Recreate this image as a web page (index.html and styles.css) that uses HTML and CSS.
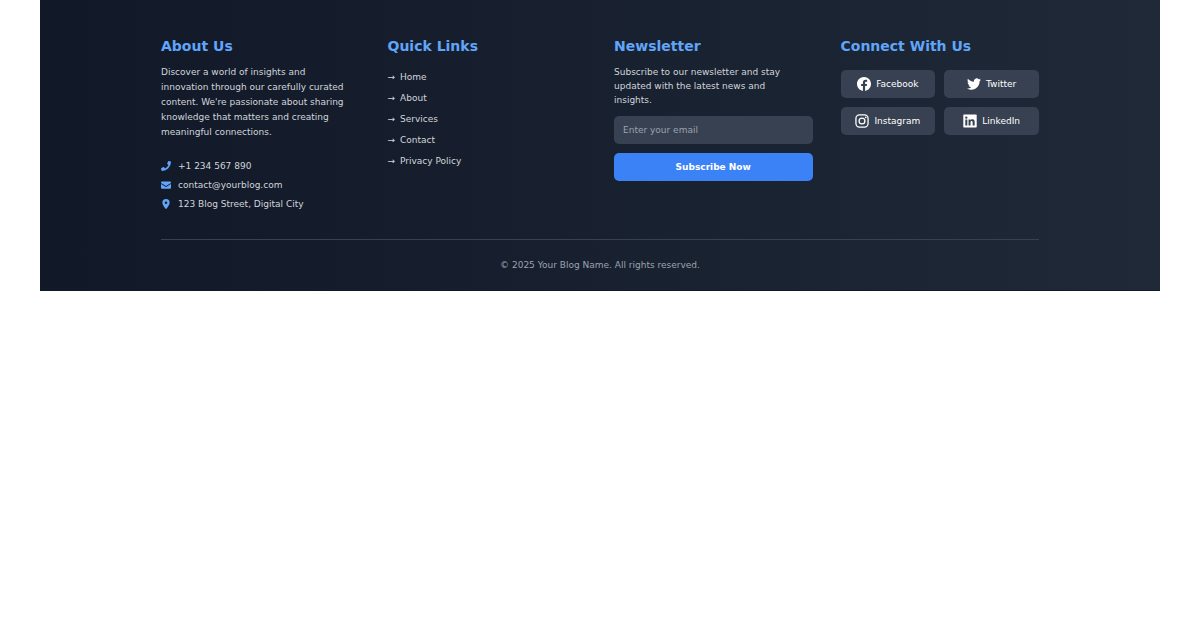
FILE: index.html
```html
<!DOCTYPE html>
<html lang="en">
<head>
<meta charset="utf-8">
<meta name="viewport" content="width=device-width, initial-scale=1">
<title>Your Blog Name</title>
<link rel="stylesheet" href="styles.css">
</head>
<body>
<footer class="footer">
  <div class="container">
    <div class="columns">
      <section>
        <h2 class="title">About Us</h2>
        <p class="about-text">Discover a world of insights and innovation through our carefully curated content. We're passionate about sharing knowledge that matters and creating meaningful connections.</p>
        <ul class="contacts">
          <li><svg class="contact-icon" viewBox="0 0 20 20" aria-hidden="true"><path d="M19.4 1 15.4 .05a1 1 0 0 0-1.1.55l-1.9 4.3a1 1 0 0 0 .3 1.1l2.3 1.9a14 14 0 0 1-6.9 6.9L6.2 12.500a1 1 0 0 0-1.100-.3L.7 14.100a1 1 0 0 0-.6 1.100l1 4a1 1 0 0 0 .9.750A17.900 17.900 0 0 0 20 2a1 1 0 0 0-.6-1z"/></svg>+1 234 567 890</li>
          <li><svg class="contact-icon" viewBox="0 0 20 20" aria-hidden="true"><path d="M2 3h16a2 2 0 0 1 2 2v.9l-10 6.200L0 5.900V5a2 2 0 0 1 2-2zM0 8l9.200 5.700q.8.400 1.600 0L20 8v7.500a2 2 0 0 1-2 2H2a2 2 0 0 1-2-2z"/></svg>contact@yourblog.com</li>
          <li><svg class="contact-icon" viewBox="0 0 20 20" aria-hidden="true"><path fill-rule="evenodd" d="M10 0a7.300 7.300 0 0 1 7.300 7.400c0 3.600-3.800 8.600-6.500 12.200a1 1 0 0 1-1.600 0C6.500 16 2.700 11 2.700 7.400A7.300 7.300 0 0 1 10 0zm0 4.800a2.600 2.600 0 1 0 0 5.200 2.600 2.600 0 0 0 0-5.200z"/></svg>123 Blog Street, Digital City</li>
        </ul>
      </section>
      <nav aria-labelledby="links-title">
        <h2 class="title" id="links-title">Quick Links</h2>
        <ul class="links">
          <li><a href="#"><span>→</span>Home</a></li>
          <li><a href="#"><span>→</span>About</a></li>
          <li><a href="#"><span>→</span>Services</a></li>
          <li><a href="#"><span>→</span>Contact</a></li>
          <li><a href="#"><span>→</span>Privacy Policy</a></li>
        </ul>
      </nav>
      <section>
        <h2 class="title">Newsletter</h2>
        <p class="news-text">Subscribe to our newsletter and stay updated with the latest news and insights.</p>
        <form class="form">
          <input class="email" type="email" aria-label="Email address" placeholder="Enter your email">
          <button class="subscribe" type="button">Subscribe Now</button>
        </form>
      </section>
      <section>
        <h2 class="title">Connect With Us</h2>
        <div class="socials">
          <a class="social" href="#"><svg viewBox="0 0 24 24" aria-hidden="true"><path d="M24 12.073c0-6.627-5.373-12-12-12s-12 5.373-12 12c0 5.990 4.388 10.954 10.125 11.854v-8.385H7.078v-3.470h3.047V9.430c0-3.007 1.792-4.669 4.533-4.669 1.312 0 2.686.235 2.686.235v2.953H15.830c-1.491 0-1.956.925-1.956 1.874v2.250h3.328l-.532 3.470h-2.796v8.385C19.612 23.027 24 18.062 24 12.073z"/></svg>Facebook</a>
          <a class="social" href="#"><svg viewBox="0 0 24 24" aria-hidden="true"><path d="M23.953 4.570a10 10 0 0 1-2.825.775 4.958 4.958 0 0 0 2.163-2.723c-.951.555-2.005.959-3.127 1.184a4.920 4.920 0 0 0-8.384 4.482C7.690 8.095 4.067 6.130 1.640 3.162a4.822 4.822 0 0 0-.666 2.475c0 1.710.870 3.213 2.188 4.096a4.904 4.904 0 0 1-2.228-.616v.06a4.923 4.923 0 0 0 3.946 4.827 4.996 4.996 0 0 1-2.212.085 4.936 4.936 0 0 0 4.604 3.417 9.867 9.867 0 0 1-6.102 2.105c-.390 0-.779-.023-1.170-.067a13.995 13.995 0 0 0 7.557 2.209c9.053 0 13.998-7.496 13.998-13.985 0-.210 0-.420-.015-.630A9.935 9.935 0 0 0 24 4.590z"/></svg>Twitter</a>
          <a class="social" href="#"><svg viewBox="0 0 24 24" aria-hidden="true"><g fill="none" stroke="currentColor" stroke-width="2.200"><rect x="1.600" y="1.600" width="20.800" height="20.800" rx="6"/><circle cx="12" cy="12" r="5"/></g><circle cx="18.400" cy="5.600" r="1.500"/></svg>Instagram</a>
          <a class="social" href="#"><svg viewBox="0 0 24 24" aria-hidden="true"><path fill-rule="evenodd" d="M1.500 1h21a1 1 0 0 1 1 1v20a1 1 0 0 1-1 1h-21a1 1 0 0 1-1-1V2a1 1 0 0 1 1-1zM4 9.300v10.400h3.400V9.300zm1.700-5.100a2 2 0 1 0 0 4 2 2 0 0 0 0-4zM9.500 9.300v10.400h3.400v-5.200c0-1.400.4-2.500 1.900-2.500s1.700 1.300 1.700 2.600v5.100H20V14c0-2.800-.6-5-3.900-5-1.600 0-2.700.9-3.200 1.700V9.300z"/></svg>LinkedIn</a>
        </div>
      </section>
    </div>
    <p class="copyright">© 2025 Your Blog Name. All rights reserved.</p>
  </div>
</footer>
</body>
</html>
```
FILE: styles.css
```css
* {
  box-sizing: border-box;
  margin: 0;
  padding: 0;
}

body {
  background: #fff;
  font-family: "DejaVu Sans", sans-serif;
  font-size: 9px;
  line-height: 14px;
  color: #d1d5db;
}

ul {
  list-style: none;
}

a {
  color: inherit;
  text-decoration: none;
}

.footer {
  margin: 0 40px;
  padding: 37px 28px 18px;
  background: linear-gradient(to right, #111827, #1f2937);
  border-bottom: 1px solid #111827;
}

.container {
  max-width: 878px;
  margin: 0 auto;
}

.columns {
  display: grid;
  grid-template-columns: repeat(auto-fit, minmax(180px, 1fr));
  gap: 28px;
}

.title {
  margin-bottom: 9px;
  font-size: 14px;
  line-height: 19px;
  color: #60a5fa;
}

.about-text,
.news-text {
  padding-right: 9px;
}

.about-text {
  line-height: 15px;
}

.contacts {
  display: grid;
  gap: 5px;
  margin-top: 19px;
}

.contacts li {
  display: flex;
  align-items: center;
  gap: 7px;
}

.contact-icon {
  width: 10px;
  height: 10px;
  fill: #60a5fa;
}

.links {
  display: grid;
  gap: 7px;
  padding-top: 5px;
}

.links a {
  display: flex;
  gap: 5px;
}

.form {
  display: grid;
  gap: 9px;
  margin-top: 9px;
}

.email,
.subscribe {
  width: 100%;
  height: 28px;
  border: 0;
  border-radius: 5px;
  font: inherit;
}

.email {
  padding: 0 9px;
  background: #374151;
  color: #fff;
}

.email::placeholder {
  color: #9ca3af;
}

.subscribe {
  background: #3b82f6;
  color: #fff;
  font-weight: 700;
}

.socials {
  display: grid;
  grid-template-columns: 1fr 1fr;
  gap: 9px;
  padding-top: 5px;
}

.social {
  display: flex;
  align-items: center;
  justify-content: center;
  gap: 5px;
  height: 28px;
  border-radius: 5px;
  background: #374151;
  color: #fff;
}

.social svg {
  width: 14px;
  height: 14px;
  fill: currentColor;
}

.copyright {
  margin-top: 28px;
  padding-top: 18px;
  border-top: 1px solid #374151;
  color: #9ca3af;
  text-align: center;
}
```
